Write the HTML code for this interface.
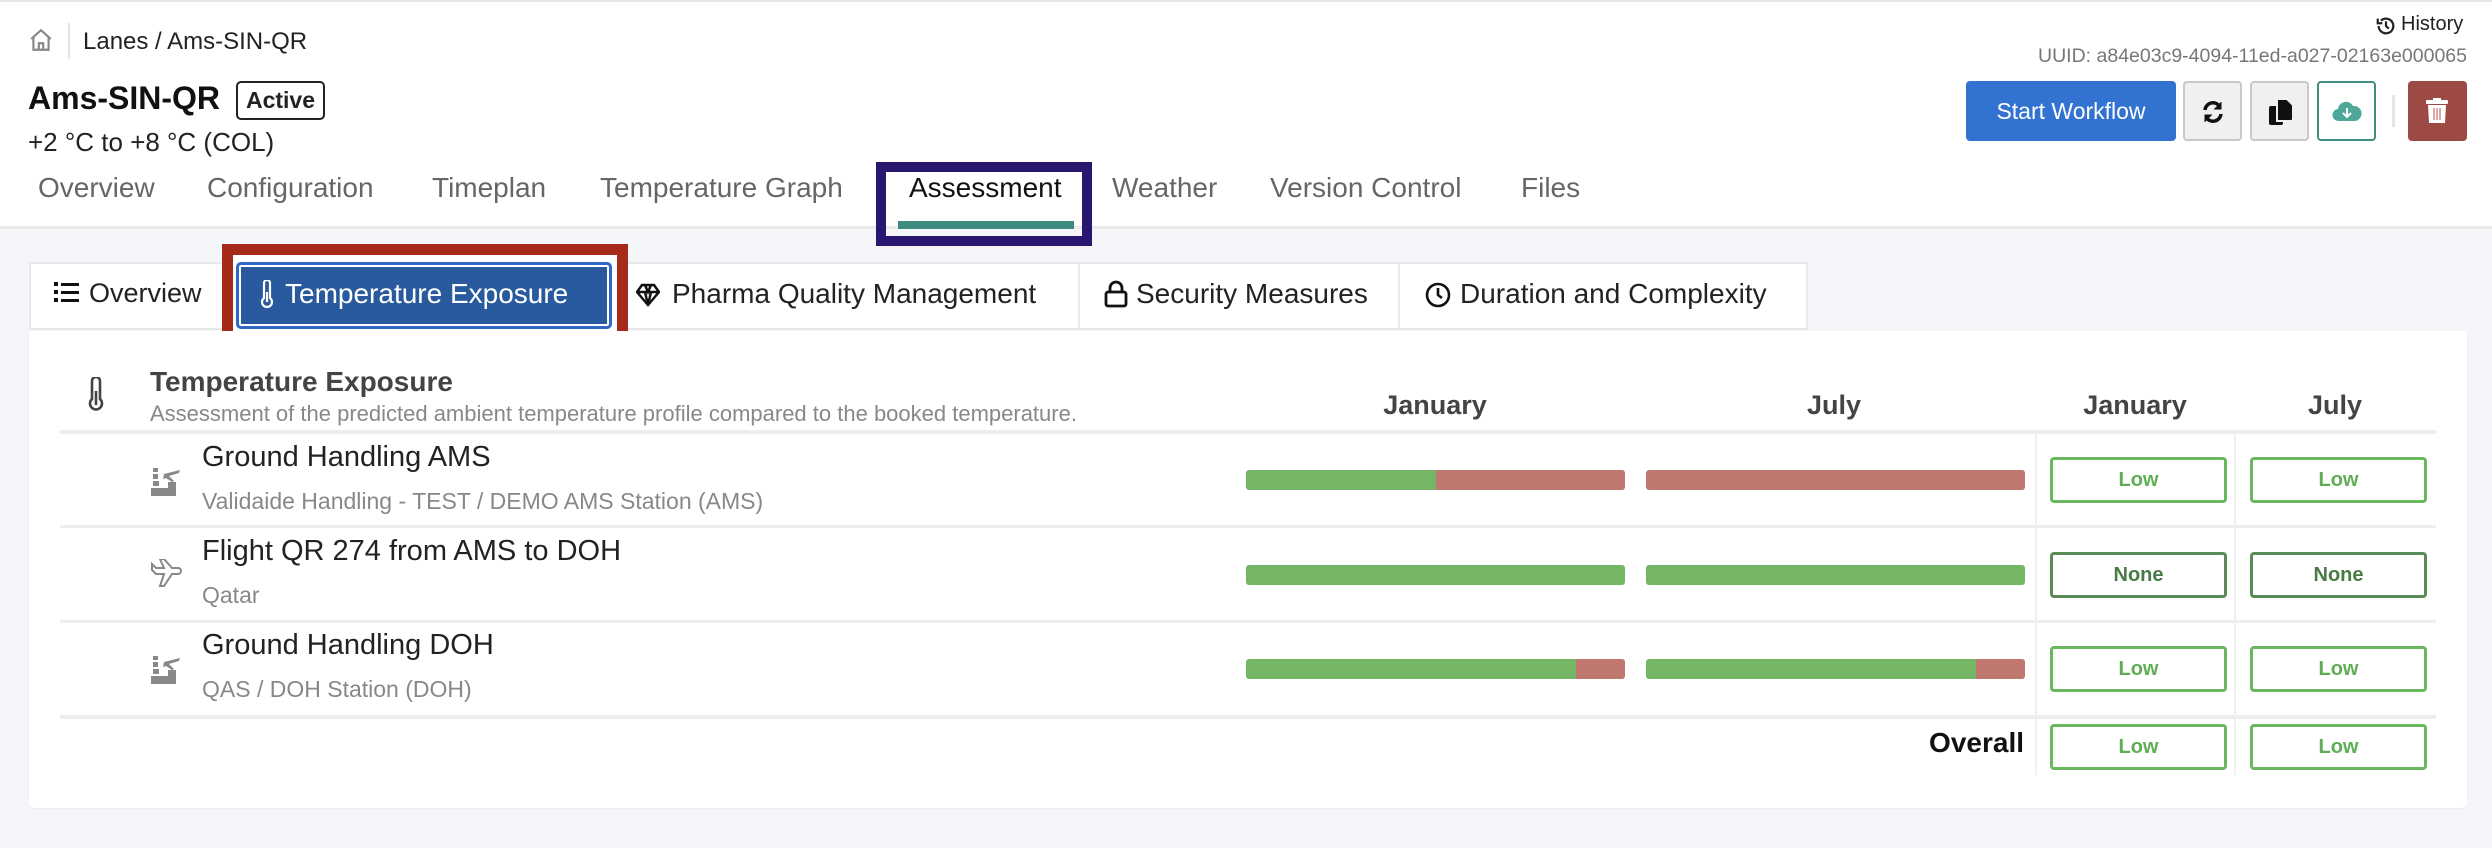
<!DOCTYPE html>
<html><head><meta charset="utf-8">
<style>
*{box-sizing:border-box;margin:0;padding:0}
body{width:2492px;height:848px;background:#f5f6f9;font-family:"Liberation Sans",sans-serif;position:relative;overflow:hidden;color:#222}
.a{position:absolute;white-space:nowrap}
.hdr{position:absolute;left:0;top:0;width:2492px;height:229px;background:#fff;border-top:2px solid #e6e6e6;border-bottom:3px solid #e8e8e8}
.tab{position:absolute;top:172px;font-size:28px;color:#666}
.btn{position:absolute;top:81px;height:60px;border-radius:4px}
.gbtn{background:#f0f0f0;border:2px solid #c8c8c8;width:59px}
.sub{position:absolute;top:262px;height:68px;background:#fff;border:2px solid #e8e8e8;font-size:27px;color:#222;display:flex;align-items:center}
.bar{position:absolute;height:20px;border-radius:3px;overflow:hidden;display:flex;box-shadow:inset 0 -3px 0 rgba(0,0,0,.15)}
.g{background:#74b566}.r{background:#c07770}
.bd{position:absolute;width:177px;height:46px;border:3px solid #6ab75f;border-radius:4px;color:#5fae55;font-size:20px;font-weight:bold;text-align:center;line-height:40px;background:#fff}
.bd.n{border-color:#5a8a55;color:#4a7a45}
.t1{position:absolute;left:202px;font-size:29px;color:#222}
.t2{position:absolute;left:202px;font-size:23px;color:#888}
.sep{position:absolute;left:60px;width:2376px;height:3px;background:#eee}
.ch{position:absolute;top:390px;font-size:27px;font-weight:bold;color:#444;text-align:center;width:200px}
</style></head><body>
<div class="hdr"></div>
<svg class="a" style="left:28px;top:27px" width="26" height="26" viewBox="0 0 24 24" fill="none" stroke="#888" stroke-width="2"><path d="M3 11L12 3l9 8M5 9v12h14V9M10 21v-6h4v6"/></svg>
<div class="a" style="left:68px;top:23px;width:2px;height:36px;background:#e5e5e5"></div>
<div class="a" style="left:83px;top:28px;font-size:24px;color:#222">Lanes / Ams-SIN-QR</div>
<div class="a" style="left:28px;top:80px;font-size:32px;font-weight:bold;color:#111">Ams-SIN-QR</div>
<div class="a" style="left:236px;top:81px;width:89px;height:39px;border:2px solid #222;border-radius:5px;font-size:23px;font-weight:bold;text-align:center;line-height:35px">Active</div>
<div class="a" style="left:28px;top:127px;font-size:26px;color:#222">+2 °C to +8 °C (COL)</div>
<div class="tab" style="left:38px">Overview</div>
<div class="tab" style="left:207px">Configuration</div>
<div class="tab" style="left:432px">Timeplan</div>
<div class="tab" style="left:600px">Temperature Graph</div>
<div class="tab" style="left:909px;color:#111">Assessment</div>
<div class="tab" style="left:1112px">Weather</div>
<div class="tab" style="left:1270px">Version Control</div>
<div class="tab" style="left:1521px">Files</div>
<div class="a" style="left:898px;top:221px;width:176px;height:8px;background:#3f8a80"></div>
<div class="a" style="left:876px;top:162px;width:216px;height:84px;border:10px solid #29166f"></div>

<svg class="a" style="left:2375px;top:15px" width="22" height="22" viewBox="0 0 24 24" fill="none" stroke="#222" stroke-width="2.4"><path d="M4 12a8 8 0 1 0 2.5-5.8M3 4v5h5M12 7v5l3 3"/></svg>
<div class="a" style="left:2401px;top:13px;font-size:20px;color:#222">History</div>
<div class="a" style="right:25px;top:45px;font-size:19.5px;color:#777">UUID: a84e03c9-4094-11ed-a027-02163e000065</div>
<div class="btn" style="left:1966px;width:210px;background:#3273d1;color:#fff;font-size:23px;text-align:center;line-height:60px">Start Workflow</div>
<div class="btn gbtn" style="left:2183px"><svg style="margin:17px 0 0 16px" width="24" height="24" viewBox="0 0 24 24" fill="none" stroke="#111" stroke-width="3.5"><path d="M4 10a8 8 0 0 1 15-3M20 14a8 8 0 0 1-15 3"/><path d="M20 2v7h-7M4 22v-7h7" fill="#111" stroke-width="1"/></svg></div>
<div class="btn gbtn" style="left:2250px"><svg style="margin:15px 0 0 17px" width="24" height="28" viewBox="0 0 24 28"><rect x="0" y="8" width="14" height="19" rx="2" fill="#111"/><path d="M8 1h10l6 6v14a2 2 0 0 1-2 2h-14z" fill="#111" stroke="#f0f0f0" stroke-width="2"/></svg></div>
<div class="btn" style="left:2317px;width:59px;border:2px solid #3f8f80;background:#fff"><svg style="margin:16px 0 0 13px" width="30" height="24" viewBox="0 0 30 24"><path d="M7 22a6 6 0 0 1-1-12 8 8 0 0 1 15-3 7 7 0 0 1 2 15z" fill="#4fa79a"/><path d="M15 9v9M11 14l4 4 4-4" stroke="#fff" stroke-width="2" fill="none"/></svg></div>
<div class="a" style="left:2392px;top:95px;width:3px;height:32px;background:#e5e5e5"></div>
<div class="btn" style="left:2408px;width:59px;background:#9e4a44"><svg style="margin:17px 0 0 18px" width="22" height="26" viewBox="0 0 22 26"><rect x="0" y="2" width="22" height="4" rx="1" fill="#fff"/><rect x="7" y="0" width="8" height="3" fill="#fff"/><path d="M2 7h18l-1 18H3z" fill="#fff"/><path d="M8 10v12M11 10v12M14 10v12" stroke="#c77" stroke-width="1.3"/></svg></div>

<div class="sub" style="left:29px;width:1779px"></div>
<div class="a" style="left:54px;top:280px"><svg width="26" height="24" viewBox="0 0 26 24" fill="#111"><rect x="0" y="2" width="4" height="4"/><rect x="0" y="10" width="4" height="4"/><rect x="0" y="18" width="4" height="4"/><rect x="7" y="3" width="18" height="3"/><rect x="7" y="11" width="18" height="3"/><rect x="7" y="19" width="18" height="3"/></svg></div>
<div class="a" style="left:89px;top:278px;font-size:27px">Overview</div>
<div class="a" style="left:222px;top:244px;width:406px;height:102px;border:11px solid #a52a1a;background:#fff"></div>
<div class="a" style="left:236px;top:262px;width:376px;height:67px;background:#2a5a9e;border:3px solid #3068c8;box-shadow:inset 0 0 0 2px #fff;border-radius:5px"></div>
<svg class="a" style="left:260px;top:280px" width="14" height="30" viewBox="0 0 14 30" fill="none" stroke="#fff" stroke-width="2.2"><path d="M4 3a3 3 0 0 1 6 0v15a5 5 0 1 1-6 0z"/><path d="M7 12v10"/></svg>
<div class="a" style="left:285px;top:278px;font-size:28px;color:#fff">Temperature Exposure</div>
<svg class="a" style="left:636px;top:283px" width="24" height="24" viewBox="0 0 24 24" fill="none" stroke="#111" stroke-width="2.5"><path d="M6 2h12l5 7-11 13L1 9zM1 9h22M9 2l3 7 3-7M12 22l-3-13M12 22l3-13"/></svg>
<div class="a" style="left:672px;top:278px;font-size:28px">Pharma Quality Management</div>
<div class="a" style="left:1078px;top:264px;width:2px;height:64px;background:#e8e8e8"></div>
<svg class="a" style="left:1104px;top:280px" width="24" height="28" viewBox="0 0 24 28" fill="none" stroke="#111" stroke-width="2.8"><path d="M6 12V8a6 6 0 0 1 12 0v4"/><rect x="2" y="12" width="20" height="14" rx="2"/></svg>
<div class="a" style="left:1136px;top:278px;font-size:28px">Security Measures</div>
<div class="a" style="left:1398px;top:264px;width:2px;height:64px;background:#e8e8e8"></div>
<svg class="a" style="left:1425px;top:282px" width="26" height="26" viewBox="0 0 26 26" fill="none" stroke="#111" stroke-width="2.6"><circle cx="13" cy="13" r="11"/><path d="M13 6v7l4 3"/></svg>
<div class="a" style="left:1460px;top:278px;font-size:28px">Duration and Complexity</div>

<div class="a" style="left:29px;top:331px;width:2438px;height:477px;background:#fff;border-radius:0 0 6px 6px;box-shadow:0 1px 2px rgba(0,0,0,.05)"></div>
<svg class="a" style="left:88px;top:377px" width="16" height="36" viewBox="0 0 16 36" fill="none" stroke="#444" stroke-width="2.6"><path d="M4 4a4 4 0 0 1 8 0v18a6 6 0 1 1-8 0z"/><path d="M8 14v14"/></svg>
<div class="a" style="left:150px;top:366px;font-size:28px;font-weight:bold;color:#444">Temperature Exposure</div>
<div class="a" style="left:150px;top:401px;font-size:22px;color:#888">Assessment of the predicted ambient temperature profile compared to the booked temperature.</div>
<div class="ch" style="left:1335px">January</div>
<div class="ch" style="left:1734px">July</div>
<div class="ch" style="left:2035px">January</div>
<div class="ch" style="left:2235px">July</div>
<div class="sep" style="top:430px;height:4px"></div>
<div class="sep" style="top:525px"></div>
<div class="sep" style="top:620px"></div>
<div class="sep" style="top:715px;height:4px"></div>
<div class="a" style="left:2035px;top:434px;width:2px;height:341px;background:#f0f0f0"></div>
<div class="a" style="left:2234px;top:434px;width:2px;height:341px;background:#f0f0f0"></div>

<svg class="a" style="left:151px;top:466px" width="31" height="30" viewBox="0 0 31 30" fill="#888"><rect x="2" y="2" width="5" height="4"/><rect x="2" y="8" width="5" height="5"/><rect x="2" y="15" width="6" height="5"/><rect x="0" y="22" width="25" height="8"/><rect x="17" y="16" width="8" height="8"/><path d="M13 8l16-4-1 3-10 3 5 5-2 1-6-4-3 1z"/></svg>
<div class="t1" style="top:441px">Ground Handling AMS</div>
<div class="t2" style="top:488px">Validaide Handling - TEST / DEMO AMS Station (AMS)</div>
<svg class="a" style="left:150px;top:559px" width="32" height="30" viewBox="0 0 32 30" fill="none" stroke="#888" stroke-width="2"><path d="M2 11l4 4h8l-4 12h4l8-12h6a3 3 0 0 0 0-6h-6L14 0h-4l4 9H6L2 5z"/></svg>
<div class="t1" style="top:535px">Flight QR 274 from AMS to DOH</div>
<div class="t2" style="top:582px">Qatar</div>
<svg class="a" style="left:151px;top:654px" width="31" height="30" viewBox="0 0 31 30" fill="#888"><rect x="2" y="2" width="5" height="4"/><rect x="2" y="8" width="5" height="5"/><rect x="2" y="15" width="6" height="5"/><rect x="0" y="22" width="25" height="8"/><rect x="17" y="16" width="8" height="8"/><path d="M13 8l16-4-1 3-10 3 5 5-2 1-6-4-3 1z"/></svg>
<div class="t1" style="top:629px">Ground Handling DOH</div>
<div class="t2" style="top:676px">QAS / DOH Station (DOH)</div>

<div class="bar" style="left:1246px;top:470px;width:379px"><div class="g" style="width:50%"></div><div class="r" style="flex:1"></div></div>
<div class="bar" style="left:1646px;top:470px;width:379px"><div class="r" style="flex:1"></div></div>
<div class="bar" style="left:1246px;top:565px;width:379px"><div class="g" style="flex:1"></div></div>
<div class="bar" style="left:1646px;top:565px;width:379px"><div class="g" style="flex:1"></div></div>
<div class="bar" style="left:1246px;top:659px;width:379px"><div class="g" style="width:87%"></div><div class="r" style="flex:1"></div></div>
<div class="bar" style="left:1646px;top:659px;width:379px"><div class="g" style="width:87%"></div><div class="r" style="flex:1"></div></div>

<div class="bd" style="left:2050px;top:457px">Low</div><div class="bd" style="left:2250px;top:457px">Low</div>
<div class="bd n" style="left:2050px;top:552px">None</div><div class="bd n" style="left:2250px;top:552px">None</div>
<div class="bd" style="left:2050px;top:646px">Low</div><div class="bd" style="left:2250px;top:646px">Low</div>
<div class="a" style="left:1900px;width:124px;text-align:right;top:727px;font-size:28px;font-weight:bold;color:#111">Overall</div>
<div class="bd" style="left:2050px;top:724px">Low</div><div class="bd" style="left:2250px;top:724px">Low</div>
</body></html>
